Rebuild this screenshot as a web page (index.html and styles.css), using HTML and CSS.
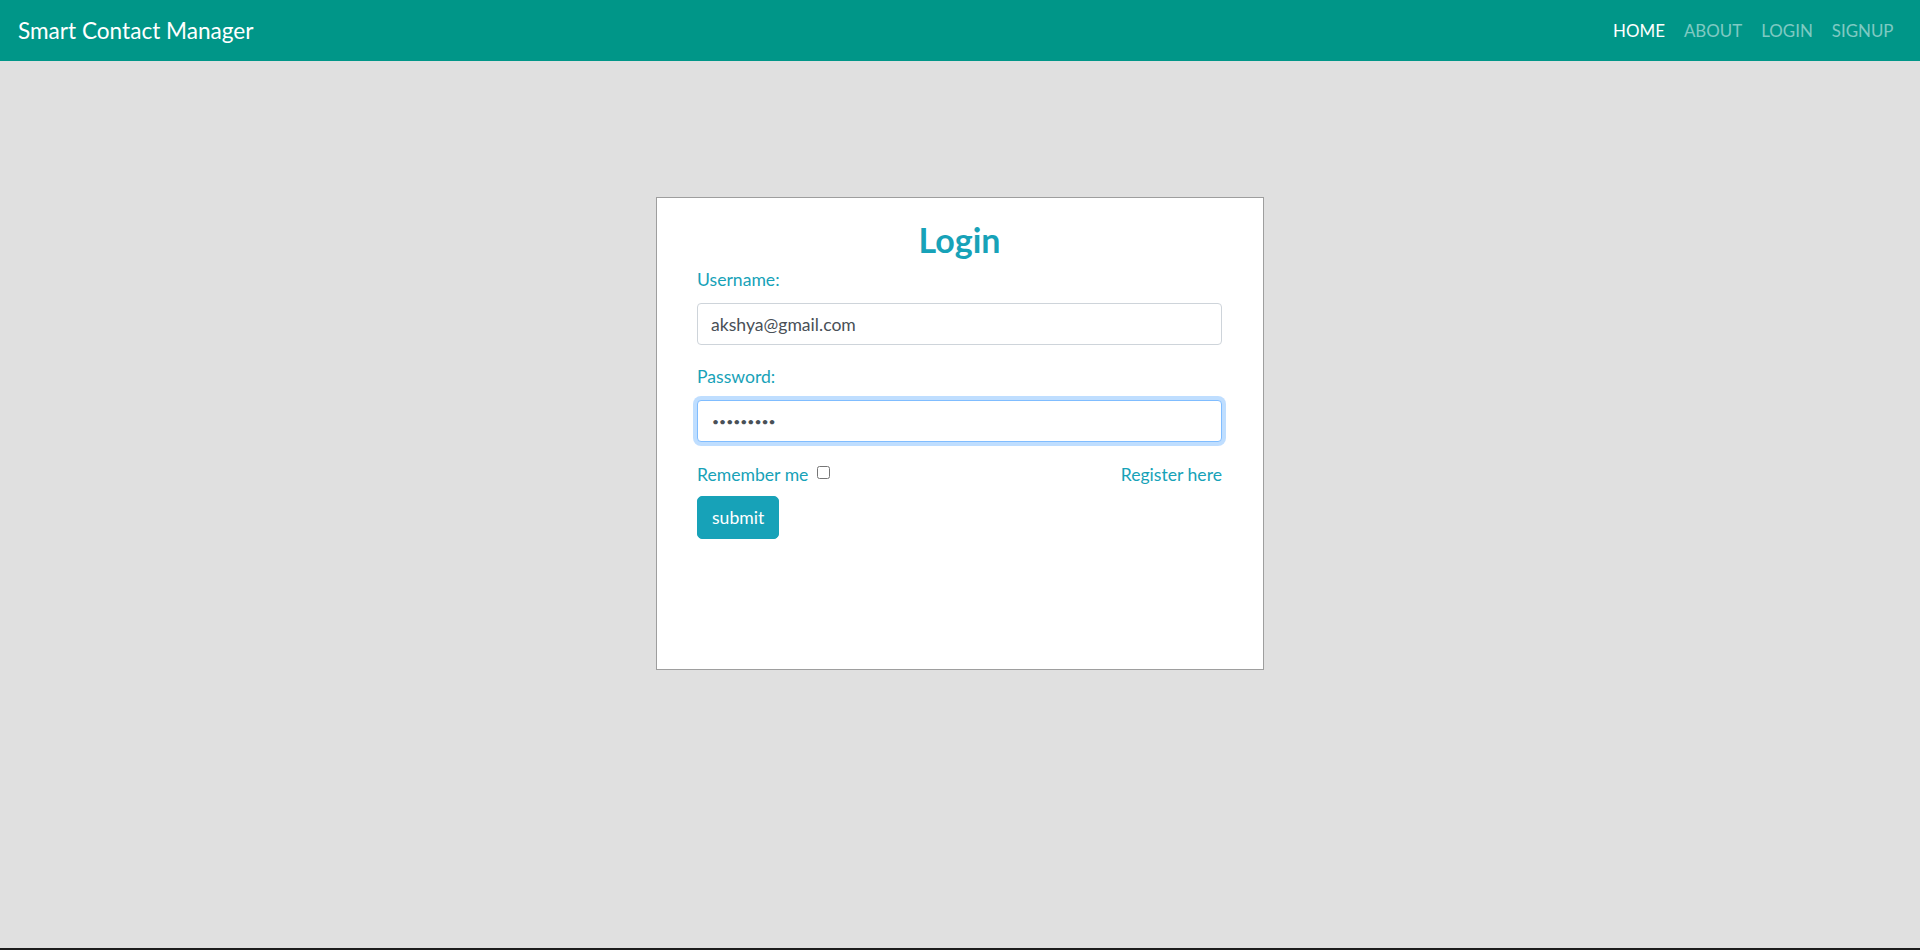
FILE: index.html
```html
<!DOCTYPE html>
<html lang="en">
<head>
<meta charset="utf-8">
<title>Login - Smart Contact Manager</title>
<link rel="stylesheet" href="styles.css">
</head>
<body>
<nav class="navbar">
  <a class="brand" href="#">Smart Contact Manager</a>
  <ul class="nav-links">
    <li><a class="nav-link active" href="#">HOME</a></li>
    <li><a class="nav-link" href="#">ABOUT</a></li>
    <li><a class="nav-link" href="#">LOGIN</a></li>
    <li><a class="nav-link" href="#">SIGNUP</a></li>
  </ul>
</nav>
<main class="main">
  <div class="card">
    <h3 class="card-title">Login</h3>
    <form class="login-form">
      <label class="field-label" for="username">Username:</label>
      <input class="field-input" id="username" type="text" value="akshya@gmail.com">
      <label class="field-label second" for="password">Password:</label>
      <input class="field-input password focused" id="password" type="password" value="123456789">
      <div class="form-row">
        <label class="remember">Remember me <input class="check" type="checkbox"></label>
        <a class="register" href="#">Register here</a>
      </div>
      <button class="btn-submit" type="button">submit</button>
    </form>
  </div>
</main>
</body>
</html>
```
FILE: styles.css
```css
* { box-sizing: border-box; }

html, body {
  margin: 0;
  padding: 0;
}

body {
  min-height: 100vh;
  display: flex;
  flex-direction: column;
  background: #e0e0e0;
  font-family: Lato, "Open Sans", sans-serif;
  font-size: 17.6px;
  color: #212529;
  border-bottom: 2px solid #1c1c1c;
}

.navbar {
  height: 61px;
  background: #009688;
  display: flex;
  align-items: center;
  justify-content: space-between;
  padding: 0 17px 0 18px;
}

.brand {
  color: #ffffff;
  text-decoration: none;
  font-size: 22.6px;
  line-height: 30px;
}

.nav-links {
  list-style: none;
  margin: 0;
  padding: 0;
  display: flex;
}

.nav-link {
  display: block;
  padding: 0 9.5px;
  color: rgba(255, 255, 255, 0.5);
  text-decoration: none;
  font-size: 16.9px;
  line-height: 24px;
}

.nav-link.active {
  color: #ffffff;
}

.main {
  flex: 1;
  display: flex;
  justify-content: center;
  align-items: flex-start;
  padding-top: 136px;
}

.card {
  width: 608px;
  height: 473px;
  background: #ffffff;
  border: 1px solid #9e9e9e;
  padding: 21px 41px 0 40px;
}

.card-title {
  margin: 0;
  text-align: center;
  color: #17a2b8;
  font-size: 34px;
  line-height: 41px;
  font-weight: 700;
}

.login-form {
  display: flex;
  flex-direction: column;
  margin-top: 8px;
}

.field-label {
  color: #17a2b8;
  line-height: 24px;
}

.field-label.second {
  margin-top: 20px;
}

.field-input {
  margin-top: 11px;
  height: 42px;
  width: 100%;
  border: 1px solid #ced4da;
  border-radius: 4px;
  padding: 0 13px;
  font-family: inherit;
  font-size: 17.6px;
  color: #495057;
  background: #ffffff;
  outline: none;
}

.field-input.password {
  font-size: 12.2px;
  padding-left: 14px;
}

.field-input.focused {
  border-color: #80bdff;
  box-shadow: 0 0 0 4px rgba(0, 123, 255, 0.25);
}

.form-row {
  margin-top: 21px;
  display: flex;
  justify-content: space-between;
  align-items: baseline;
  line-height: 24px;
}

.remember {
  color: #17a2b8;
}

.check {
  width: 13px;
  height: 13px;
  margin: 0 0 0 4px;
  vertical-align: 2px;
}

.register {
  color: #17a2b8;
  text-decoration: none;
}

.btn-submit {
  margin-top: 9px;
  align-self: flex-start;
  height: 43px;
  padding: 0 14px;
  border: 1px solid #17a2b8;
  border-radius: 5px;
  background: #17a2b8;
  color: #ffffff;
  font-family: inherit;
  font-size: 17.6px;
  cursor: pointer;
}
```
